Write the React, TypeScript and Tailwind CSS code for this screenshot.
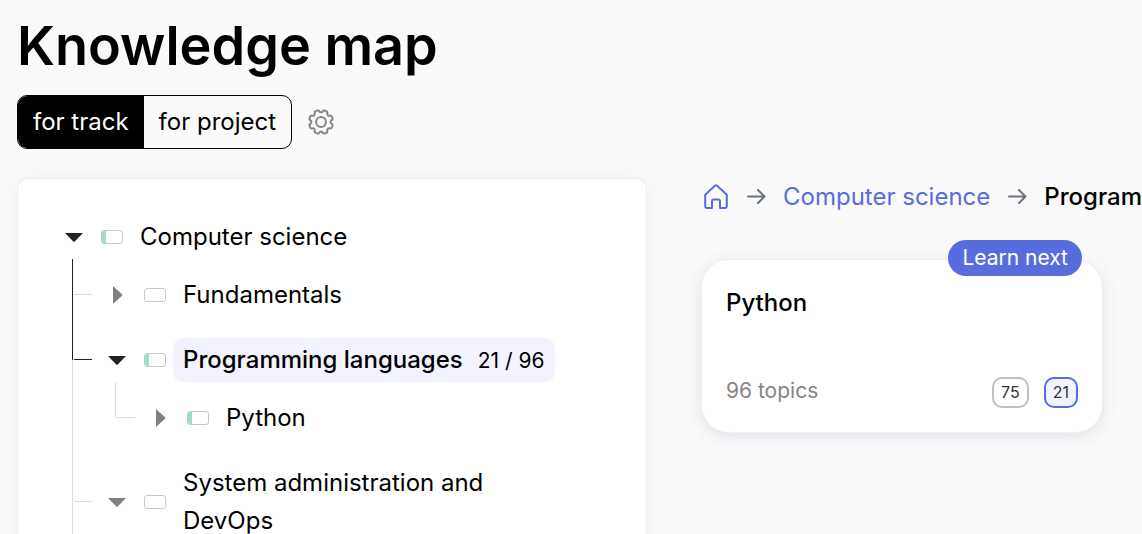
import type { ReactNode } from 'react'

type TopicNode = {
  name: string
  progress: boolean
  open: boolean
  muted?: boolean
  selected?: boolean
  count?: string
  // line colours of the branch: above the elbow, the elbow, below it
  above?: string
  elbow?: string
  below?: string
  children?: TopicNode[]
}

const tree: TopicNode = {
  name: 'Computer science',
  progress: true,
  open: true,
  children: [
    {
      name: 'Fundamentals',
      progress: false,
      open: false,
      muted: true,
      above: 'bg-[#222222]',
      elbow: 'bg-[#dcdcdc]',
      below: 'bg-[#222222]',
    },
    {
      name: 'Programming languages',
      progress: true,
      open: true,
      selected: true,
      count: '21 / 96',
      above: 'bg-[#222222]',
      elbow: 'bg-[#222222]',
      below: 'bg-[#dcdcdc]',
      children: [
        {
          name: 'Python',
          progress: true,
          open: false,
          muted: true,
          above: 'bg-[#dcdcdc]',
          elbow: 'bg-[#dcdcdc]',
        },
      ],
    },
    {
      name: 'System administration and DevOps',
      progress: false,
      open: true,
      muted: true,
      above: 'bg-[#dcdcdc]',
      elbow: 'bg-[#dcdcdc]',
      below: 'bg-[#dcdcdc]',
    },
  ],
}

const gearPath =
  Array.from({ length: 144 }, (_, i) => {
    const a = (i / 144) * Math.PI * 2
    const r = 10.8 + 1.3 * Math.tanh(0.6 - 2 * Math.cos(8 * a))
    return `${i ? 'L' : 'M'}${(13 + r * Math.sin(a)).toFixed(2)} ${(13 - r * Math.cos(a)).toFixed(2)}`
  }).join('') + 'Z'

function GearIcon() {
  return (
    <svg width="26" height="26" viewBox="0 0 26 26" fill="none" stroke="#858585" strokeWidth="2" strokeLinejoin="round">
      <path d={gearPath} />
      <circle cx="13" cy="13" r="4.9" />
    </svg>
  )
}

function HomeIcon() {
  return (
    <svg width="26" height="26" viewBox="0 0 26 26" fill="none" stroke="#576ddc" strokeWidth="2" strokeLinejoin="round">
      <path d="M2.2 10.8 12.2 1.6Q13 .9 13.8 1.6L23.8 10.8V22.6Q23.8 24 22.4 24H17V17.4Q17 15.6 15.2 15.6H10.8Q9 15.6 9 17.4V24H3.6Q2.2 24 2.2 22.6Z" />
    </svg>
  )
}

function ArrowIcon() {
  return (
    <svg className="shrink-0" width="20" height="16" viewBox="0 0 20 16" fill="none" stroke="#6c757d" strokeWidth="2" strokeLinecap="round" strokeLinejoin="round">
      <path d="M2 7.5H18.5M12 1 18.5 7.5 12 14" />
    </svg>
  )
}

function Caret({ open, muted }: { open: boolean; muted?: boolean }) {
  return (
    <svg width="20" height="20" viewBox="0 0 20 20" fill={muted ? '#808080' : '#222222'}>
      {open ? <path d="M1 6H19L10.7 14.6Q10 15.3 9.3 14.6Z" /> : <path d="M6 1V19L15 10.7Q15.7 10 15 9.3Z" />}
    </svg>
  )
}

function Battery({ filled }: { filled: boolean }) {
  return (
    <span className="flex h-[14px] w-[22px] shrink-0 overflow-hidden rounded-[3px] border border-[#c8c8c8]">
      {filled && <span className="w-1 bg-[#9fdcc8]" />}
    </span>
  )
}

function Branch({ node, first }: { node: TopicNode; first?: boolean }) {
  return (
    <li className="relative">
      {node.below && <span className={`absolute top-[22px] bottom-0 -left-[35px] w-px ${node.below}`} />}
      <div className="relative flex items-center">
        {node.above && (
          <span className={`absolute -left-[35px] bottom-1/2 w-px ${first ? '-top-[14px]' : '-top-[21px]'} ${node.above}`} />
        )}
        {node.elbow && <span className={`absolute bottom-1/2 -left-[33px] h-px w-[18px] ${node.elbow}`} />}
        <button className="shrink-0" aria-label={`Toggle ${node.name}`}>
          <Caret open={node.open} muted={node.muted} />
        </button>
        <span className="ml-[17px] flex">
          <Battery filled={node.progress} />
        </span>
        <a
          href="#"
          className={`ml-[7px] rounded-[10px] px-[10px] py-[3px] text-[24px] leading-[38px] ${
            node.selected ? 'bg-[#f3f2ff] font-medium whitespace-nowrap' : ''
          }`}
        >
          {node.name}
          {node.count && <span className="ml-[15px] text-[21px] leading-none font-normal">{node.count}</span>}
        </a>
      </div>
      {node.children && (
        <ul className="mt-[14px] ml-[43px] flex flex-col">
          {node.children.map((child, i) => (
            <Branch key={child.name} node={child} first={i === 0} />
          ))}
        </ul>
      )}
      {/* room before the next branch, the line runs on through it */}
      {node.below && <div className="h-[21px]" />}
    </li>
  )
}

function Badge({ className, children }: { className: string; children: ReactNode }) {
  return (
    <span className={`rounded-[10px] border-2 px-[7px] text-[16px] leading-[27px] text-[#333333] ${className}`}>
      {children}
    </span>
  )
}

export default function App() {
  return (
    <main className="h-screen overflow-hidden bg-[#fafafa] px-[17px] pt-4 font-['Inter',sans-serif] text-black">
      <h1 className="text-[54px] leading-[60px] font-semibold">Knowledge map</h1>

      <div className="mt-[19px] flex items-center gap-4">
        <div className="flex overflow-hidden rounded-[10px] border border-black text-[24px] leading-[52px]">
          <button className="bg-black px-[15px] text-white">for track</button>
          <button className="px-[15px]">for project</button>
        </div>
        <button aria-label="Settings">
          <GearIcon />
        </button>
      </div>

      <div className="mt-[29px] grid grid-cols-[minmax(0,630px)_minmax(0,1fr)] gap-[54px]">
        <section className="rounded-xl border border-[#ececec] bg-white pt-9 pr-20 pb-10 pl-[46px] shadow-[0_0_16px_rgba(0,0,0,0.03)]">
          <ul>
            <Branch node={tree} />
          </ul>
        </section>

        <section>
          <nav className="flex items-center text-[24px] leading-[38px] whitespace-nowrap">
            <a href="#" aria-label="Home" className="ml-[2px] shrink-0">
              <HomeIcon />
            </a>
            <span className="mx-[17px]">
              <ArrowIcon />
            </span>
            <a href="#" className="text-[#576ddc]">Computer science</a>
            <span className="mx-[17px]">
              <ArrowIcon />
            </span>
            <span className="font-medium">Programming languages</span>
          </nav>

          <article className="relative mt-[43px] max-w-[402px] rounded-[28px] border border-[#f0f0f2] bg-white px-6 pt-6 pb-6 shadow-[0_4px_16px_rgba(60,80,130,0.14)]">
            <span className="absolute -top-5 right-5 rounded-full bg-[#576ddc] px-[14px] text-[21px] leading-9 text-white">
              Learn next
            </span>
            <h2 className="text-[24px] leading-[38px] font-medium">Python</h2>
            <div className="mt-[55px] flex items-start">
              <span className="grow text-[21px] leading-[27px] text-[#858585]">96 topics</span>
              <Badge className="border-[#bfbfbf]">75</Badge>
              <Badge className="ml-[15px] border-[#576ddc] bg-[#f3f2ff]">21</Badge>
            </div>
          </article>
        </section>
      </div>
    </main>
  )
}
